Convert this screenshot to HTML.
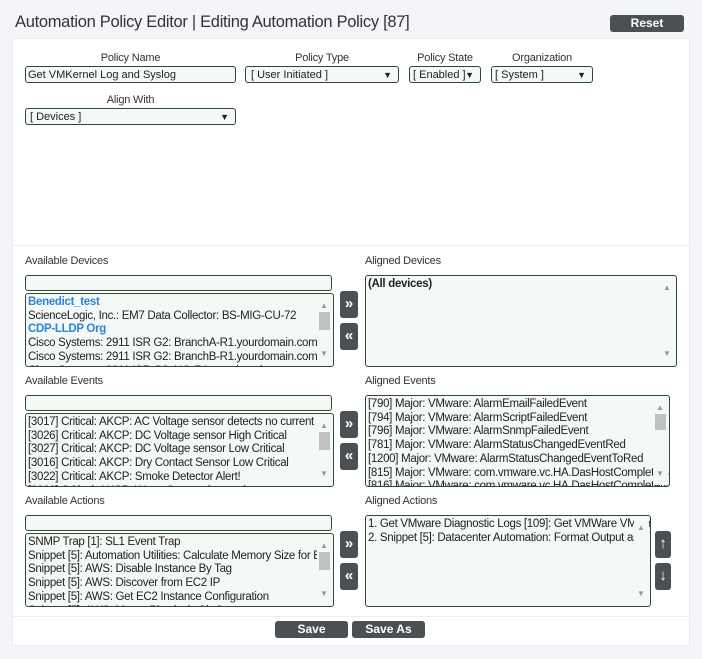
<!DOCTYPE html>
<html><head><style>
*{box-sizing:border-box;margin:0;padding:0}
body{width:702px;height:659px;background:#f3f5f9;font-family:"Liberation Sans",sans-serif;font-size:12px;color:#222;position:relative;overflow:hidden}
.a{position:absolute}
.title{left:15px;top:13px;font-size:16.5px;color:#333;letter-spacing:-0.3px}
.btn{background:#4b5053;color:#fff;font-weight:bold;font-size:12px;text-align:center;border-radius:3px}
.panel{left:12px;top:38px;width:678px;height:608px;background:#fff;border:1px solid #e8ebef}
.lbl{font-size:11px;color:#333;text-align:center;letter-spacing:-0.2px}
.inp{border:1px solid #2f4a2f;border-radius:3px;background:#f4f8f6;font-size:11px;padding:2px 2px;line-height:13px;white-space:nowrap;overflow:hidden}
.sel::after{content:"▼";position:absolute;right:6px;top:2px;font-size:9px}
.list{border:1px solid #2f4a2f;border-radius:3px;background:#f4f8f6;overflow:hidden;font-size:11.5px;line-height:13.7px;padding:2px 2px 1px;white-space:nowrap;letter-spacing:-0.3px}
.sb{position:absolute;right:1px;top:1px;bottom:1px;width:15px;background:#f4f8f6}
.sb .up,.sb .dn{position:absolute;left:3px;font-size:8px;color:#999}
.sb .up{top:4px}.sb .dn{bottom:4px}
.sb .th{position:absolute;left:2px;width:11px;background:#c1c1c1}
.arr{width:18px;height:27px;font-size:15px;line-height:25px}
.blue{color:#2a86d6;font-weight:bold}
.sep{left:13px;width:676px;height:1px;background:#eceff2}
</style></head><body>
<div class="a title">Automation Policy Editor | Editing Automation Policy [87]</div>
<div class="a btn" style="left:610px;top:15px;width:74px;height:17px;line-height:17px">Reset</div>
<div class="a panel"></div>
<div class="a sep" style="top:245px"></div>
<div class="a sep" style="top:616px"></div>

<div class="a lbl" style="left:25px;top:52px;width:211px">Policy Name</div>
<div class="a inp" style="left:25px;top:66px;width:211px;height:17px">Get VMKernel Log and Syslog</div>
<div class="a lbl" style="left:245px;top:52px;width:154px">Policy Type</div>
<div class="a inp sel" style="left:245px;top:66px;width:154px;height:17px;padding-left:5px">[ User Initiated ]</div>
<div class="a lbl" style="left:409px;top:52px;width:72px">Policy State</div>
<div class="a inp sel" style="left:409px;top:66px;width:72px;height:17px;padding-left:3px">[ Enabled ]</div>
<div class="a lbl" style="left:491px;top:52px;width:102px">Organization</div>
<div class="a inp sel" style="left:491px;top:66px;width:102px;height:17px;padding-left:3px">[ System ]</div>
<div class="a lbl" style="left:25px;top:94px;width:211px">Align With</div>
<div class="a inp sel" style="left:25px;top:108px;width:211px;height:17px;padding-left:4px">[ Devices ]</div>

<!-- Devices -->
<div class="a lbl" style="left:25px;top:255px">Available Devices</div>
<div class="a inp" style="left:25px;top:275px;width:307px;height:16px"></div>
<div class="a list" style="left:25px;top:293px;width:309px;height:74px">
<div class="blue">Benedict_test</div><div>ScienceLogic, Inc.: EM7 Data Collector: BS-MIG-CU-72</div><div class="blue">CDP-LLDP Org</div><div>Cisco Systems: 2911 ISR G2: BranchA-R1.yourdomain.com</div><div>Cisco Systems: 2911 ISR G2: BranchB-R1.yourdomain.com</div><div>Cisco Systems: 2911 ISR G2: HQ-R1.yourdomain.com</div>
<div class="sb"><span class="up">▲</span><div class="th" style="top:17px;height:18px"></div><span class="dn">▼</span></div></div>
<div class="a btn arr" style="left:340px;top:291px">»</div>
<div class="a btn arr" style="left:340px;top:323px">«</div>
<div class="a lbl" style="left:365px;top:255px">Aligned Devices</div>
<div class="a list" style="left:365px;top:275px;width:312px;height:92px"><div style="font-weight:bold">(All devices)</div>
<div class="sb"><span class="up">▲</span><span class="dn">▼</span></div></div>

<!-- Events -->
<div class="a lbl" style="left:25px;top:375px">Available Events</div>
<div class="a inp" style="left:25px;top:395px;width:307px;height:16px"></div>
<div class="a list" style="left:25px;top:413px;width:309px;height:74px">
<div>[3017] Critical: AKCP: AC Voltage sensor detects no current</div><div>[3026] Critical: AKCP: DC Voltage sensor High Critical</div><div>[3027] Critical: AKCP: DC Voltage sensor Low Critical</div><div>[3016] Critical: AKCP: Dry Contact Sensor Low Critical</div><div>[3022] Critical: AKCP: Smoke Detector Alert!</div><div>[3020] Critical: AKCP: Water Sensor detected water</div>
<div class="sb"><span class="up">▲</span><div class="th" style="top:17px;height:18px"></div><span class="dn">▼</span></div></div>
<div class="a btn arr" style="left:340px;top:411px">»</div>
<div class="a btn arr" style="left:340px;top:443px">«</div>
<div class="a lbl" style="left:365px;top:375px">Aligned Events</div>
<div class="a list" style="left:365px;top:395px;width:305px;height:92px">
<div>[790] Major: VMware: AlarmEmailFailedEvent</div><div>[794] Major: VMware: AlarmScriptFailedEvent</div><div>[796] Major: VMware: AlarmSnmpFailedEvent</div><div>[781] Major: VMware: AlarmStatusChangedEventRed</div><div>[1200] Major: VMware: AlarmStatusChangedEventToRed</div><div>[815] Major: VMware: com.vmware.vc.HA.DasHostCompleteDatastoreFailure</div><div>[816] Major: VMware: com.vmware.vc.HA.DasHostCompleteNetwork</div>
<div class="sb"><span class="up">▲</span><div class="th" style="top:17px;height:16px"></div><span class="dn">▼</span></div></div>

<!-- Actions -->
<div class="a lbl" style="left:25px;top:495px">Available Actions</div>
<div class="a inp" style="left:25px;top:515px;width:307px;height:16px"></div>
<div class="a list" style="left:25px;top:533px;width:309px;height:74px">
<div>SNMP Trap [1]: SL1 Event Trap</div><div>Snippet [5]: Automation Utilities: Calculate Memory Size for Each Process</div><div>Snippet [5]: AWS: Disable Instance By Tag</div><div>Snippet [5]: AWS: Discover from EC2 IP</div><div>Snippet [5]: AWS: Get EC2 Instance Configuration</div><div>Snippet [5]: AWS: Merge Physical with Component</div>
<div class="sb"><span class="up">▲</span><div class="th" style="top:17px;height:18px"></div><span class="dn">▼</span></div></div>
<div class="a btn arr" style="left:340px;top:531px">»</div>
<div class="a btn arr" style="left:340px;top:563px">«</div>
<div class="a lbl" style="left:365px;top:495px">Aligned Actions</div>
<div class="a list" style="left:365px;top:515px;width:286px;height:92px">
<div>1. Get VMware Diagnostic Logs [109]: Get VMWare VMkernel Logs</div><div>2. Snippet [5]: Datacenter Automation: Format Output as HTML</div>
<div class="sb"><span class="up">▲</span><span class="dn">▼</span></div></div>
<div class="a btn arr" style="left:655px;top:531px;height:27px;width:16px">↑</div>
<div class="a btn arr" style="left:655px;top:563px;height:27px;width:16px">↓</div>

<div class="a btn" style="left:275px;top:621px;width:73px;height:17px;line-height:17px">Save</div>
<div class="a btn" style="left:352px;top:621px;width:73px;height:17px;line-height:17px">Save As</div>
</body></html>
